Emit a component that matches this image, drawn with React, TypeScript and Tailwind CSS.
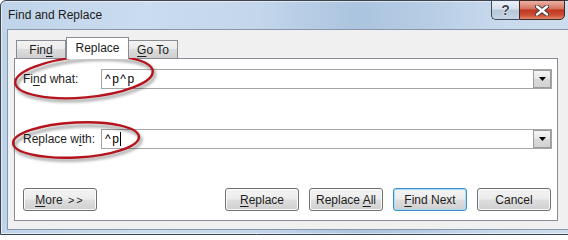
import type { ReactNode } from "react";

const btnBase =
  "h-[23px] w-[74px] rounded-[3px] border text-[12px] text-[#1e1e1e] flex items-center justify-center bg-[linear-gradient(#f3f3f3,#ececec_48%,#dedede_52%,#d0d0d0)]";

function U({ children }: { children: ReactNode }) {
  return <span className="underline underline-offset-[2px] decoration-1">{children}</span>;
}

function Button({ children, primary }: { children: ReactNode; primary?: boolean }) {
  return (
    <div
      className={
        btnBase +
        (primary
          ? " border-[#3d8fcb] shadow-[inset_0_0_0_1px_#a9dcf5]"
          : " border-[#707070] shadow-[inset_0_0_0_1px_#fbfbfb]")
      }
    >
      <span>{children}</span>
    </div>
  );
}

function ComboInput({ value, caret }: { value: string; caret?: boolean }) {
  return (
    <div className="flex-1 h-[20px] border border-[#a5a5a5] bg-white flex items-center">
      <div className="flex-1 pl-[3px] flex items-center text-[12px] text-black leading-none">
        <span className="tracking-[1.5px]">{value}</span>
        {caret && <span className="h-[14px] w-px bg-black" />}
      </div>
      <div className="h-[18px] w-[18px] border border-[#9b9b9b] bg-[linear-gradient(#f4f4f4,#e6e6e6_50%,#d9d9d9_50%,#d3d3d3)] flex items-center justify-center">
        <svg width="7" height="4" viewBox="0 0 7 4">
          <path d="M0 0h7L3.5 4z" fill="#000" />
        </svg>
      </div>
    </div>
  );
}

export default function App() {
  return (
    <div className="relative w-[568px] h-[236px] overflow-hidden bg-white font-['Liberation_Sans',Arial,sans-serif]">
      <div className="flex flex-col w-[576px] h-[235px] rounded-tl-[6px] border border-[#3b434d] bg-[linear-gradient(to_right,#bfd3e9_0%,#cadcef_25%,#c3d6eb_45%,#abc4df_62%,#b4cbe3_72%,#c9daee_88%,#cddded_100%)] shadow-[inset_0_0_0_1px_rgba(255,255,255,0.55)]">
        {/* title bar */}
        <div className="h-[28px] flex items-start justify-between">
          <div className="pl-[7px] h-[28px] flex items-center text-[12px] text-[#1b1b1b]">Find and Replace</div>
          <div className="mr-[10px] -mt-px flex">
            <div className="h-[20px] w-[28px] rounded-bl-[5px] border border-r-0 border-[#3e4b5e] bg-[linear-gradient(#eaf0f6,#d6e0eb_45%,#b7c7d9_50%,#c6d4e3)] flex items-center justify-center">
              <span className="text-[14px] font-bold leading-none text-[#3a4656] [text-shadow:0_0_1px_#fff,0_0_1px_#fff,0_0_2px_#fff]">?</span>
            </div>
            <div className="h-[20px] w-[46px] rounded-br-[5px] border border-[#3e2b28] bg-[linear-gradient(#eab1a4,#d77563_42%,#c2371f_50%,#cd4d33_78%,#e3886d)] flex items-center justify-center">
              <svg width="14" height="11" viewBox="0 0 14 11">
                <path d="M2 1.5l10 8M12 1.5l-10 8" stroke="#3a3a3a" strokeWidth="4.2" strokeLinecap="round" />
                <path d="M2 1.5l10 8M12 1.5l-10 8" stroke="#fff" strokeWidth="2.4" strokeLinecap="round" />
              </svg>
            </div>
          </div>
        </div>

        {/* client area */}
        <div className="flex-1 ml-[6px] mr-[6px] mb-[4px] border border-[#8596ad] bg-[#f0f0f0] flex flex-col pt-[7px]">
          {/* tabs */}
          <div className="ml-[8px] flex items-end h-[21px] relative z-10 text-[12px] text-[#1e1e1e]">
            <div className="h-[18px] w-[50px] border border-b-0 border-[#898c95] bg-[linear-gradient(#f3f3f3,#ebebeb_50%,#dcdcdc_50%,#cfcfcf)] flex items-center justify-center">
              <span>
                Fin<U>d</U>
              </span>
            </div>
            <div className="h-[22px] -mb-px w-[63px] border border-b-0 border-[#898c95] bg-white flex items-center justify-center pb-px">
              <span>Replace</span>
            </div>
            <div className="h-[18px] w-[49px] border border-b-0 border-l-0 border-[#898c95] bg-[linear-gradient(#f3f3f3,#ebebeb_50%,#dcdcdc_50%,#cfcfcf)] flex items-center justify-center">
              <span>
                <U>G</U>o To
              </span>
            </div>
          </div>

          {/* panel */}
          <div className="flex-1 ml-[6px] mr-[10px] mb-[8px] border border-[#898c95] bg-white pl-[8px] pr-[5px] pt-[10px] flex flex-col text-[12px] text-[#1e1e1e]">
            <div className="flex items-center">
              <div className="w-[78px]">
                Fi<U>n</U>d what:
              </div>
              <ComboInput value="^p^p" />
            </div>
            <div className="flex items-center mt-[40px]">
              <div className="w-[78px]">
                Replace w<U>i</U>th:
              </div>
              <ComboInput value="^p" caret />
            </div>
            <div className="flex items-center mt-[39px] mr-px">
              <Button>
                <U>M</U>ore <span className="ml-[2px] tracking-[2px] text-[11px]">&gt;&gt;</span>
              </Button>
              <div className="flex-1" />
              <div className="flex gap-[10px]">
                <Button>
                  <U>R</U>eplace
                </Button>
                <Button>
                  Replace <U>A</U>ll
                </Button>
                <Button primary>
                  <U>F</U>ind Next
                </Button>
                <Button>Cancel</Button>
              </div>
            </div>
          </div>
        </div>
      </div>

      {/* red annotation ellipses */}
      <svg className="absolute inset-0 pointer-events-none" width="568" height="236" viewBox="0 0 568 236">
        <defs>
          <filter id="blur" x="-20%" y="-50%" width="140%" height="200%">
            <feGaussianBlur stdDeviation="1.6" />
          </filter>
        </defs>
        <g filter="url(#blur)" opacity="0.35">
          <ellipse cx="86" cy="80" rx="69" ry="20" transform="rotate(-5 86 80)" fill="none" stroke="#000" strokeWidth="3" />
          <ellipse cx="78" cy="143" rx="63" ry="17" transform="rotate(-3 78 143)" fill="none" stroke="#000" strokeWidth="3" />
        </g>
        <ellipse cx="84" cy="77" rx="69" ry="20.5" transform="rotate(-5 84 77)" fill="none" stroke="#b5141f" strokeWidth="2.4" />
        <ellipse cx="76" cy="140" rx="63" ry="17.5" transform="rotate(-3 76 140)" fill="none" stroke="#b5141f" strokeWidth="2.4" />
      </svg>
    </div>
  );
}
